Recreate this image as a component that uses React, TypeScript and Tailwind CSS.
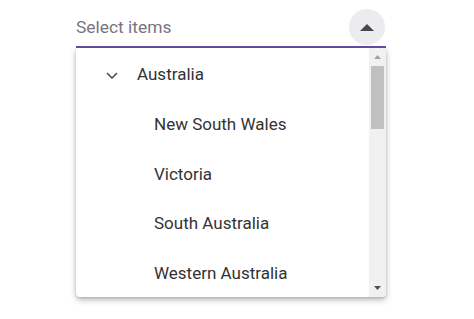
import React from "react";

const items = [
  { label: "New South Wales" },
  { label: "Victoria" },
  { label: "South Australia" },
  { label: "Western Australia" },
];

export default function App() {
  return (
    <div
      className="w-[474px] h-[319px] bg-white pl-[76px] pt-[9px]"
      style={{ fontFamily: "Roboto, 'Liberation Sans', sans-serif" }}
    >
      <div className="w-[310px]">
        <div className="h-[39px] border-b-2 border-[#6750a4] flex items-start justify-between">
          <span className="mt-[6px] text-[17.4px] leading-[24px] text-[#79747e]">Select items</span>
          <div className="w-[36px] h-[36px] rounded-full bg-[#ecebee] flex items-center justify-center mr-[1px]">
            <svg width="14" height="7" viewBox="0 0 14 7">
              <path d="M0 7 L7 0 L14 7 Z" fill="#49454f" />
            </svg>
          </div>
        </div>
        <div className="h-[249px] bg-white rounded-b-[4px] shadow-[0_3px_6px_rgba(0,0,0,0.25),0_1px_3px_rgba(0,0,0,0.15)] flex overflow-hidden">
          <div className="flex-1 flex flex-col pt-[2px] text-[17px] text-[#333333]">
            <div className="h-[50px] flex items-center pl-[30px] shrink-0">
              <svg width="12" height="7" viewBox="0 0 12 7" className="mr-[19px]">
                <path d="M1 1 L6 6 L11 1" fill="none" stroke="#49454f" strokeWidth="1.5" />
              </svg>
              <span>Australia</span>
            </div>
            {items.map((it) => (
              <div key={it.label} className="h-[49.5px] flex items-center pl-[78px] shrink-0">
                <span>{it.label}</span>
              </div>
            ))}
          </div>
          <div className="w-[17px] bg-[#f1f1f1] flex flex-col items-center">
            <div className="h-[18px] flex items-center justify-center">
              <svg width="7" height="4" viewBox="0 0 7 4">
                <path d="M0 4 L3.5 0 L7 4 Z" fill="#a3a3a3" />
              </svg>
            </div>
            <div className="w-[13px] h-[63px] bg-[#c1c1c1]" />
            <div className="flex-1" />
            <div className="h-[18px] flex items-center justify-center">
              <svg width="7" height="4" viewBox="0 0 7 4">
                <path d="M0 0 L3.5 4 L7 0 Z" fill="#505050" />
              </svg>
            </div>
          </div>
        </div>
      </div>
    </div>
  );
}
